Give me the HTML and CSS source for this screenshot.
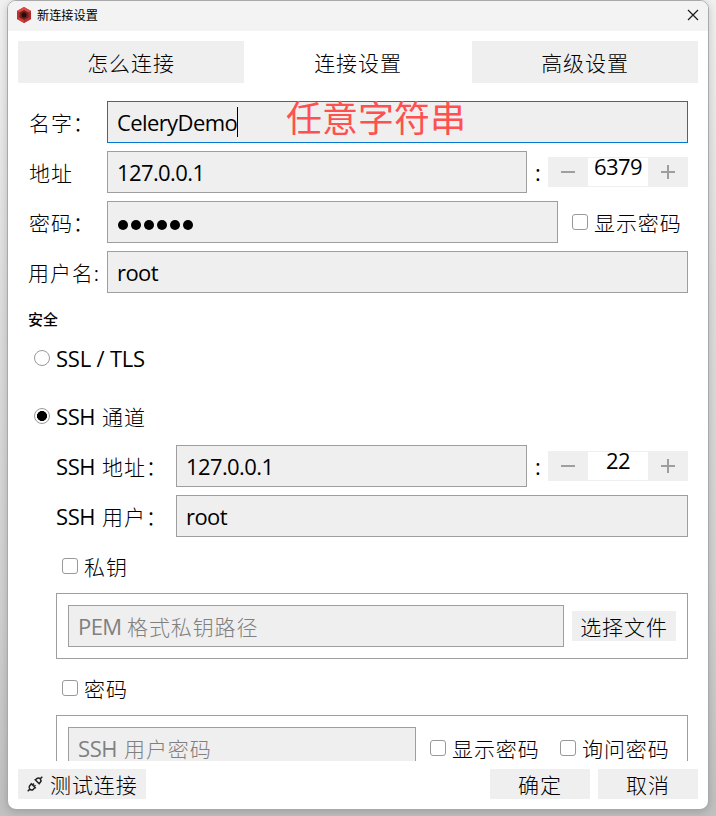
FILE: index.html
```html
<!DOCTYPE html>
<html lang="zh-CN">
<head>
<meta charset="utf-8">
<title>新连接设置</title>
<link rel="stylesheet" href="styles.css">
</head>
<body>
<main class="window">
  <header class="titlebar">
    <svg class="logo" width="16" height="16" viewBox="0 0 16 16"><path d="M8 0l7 4v8l-7 4-7-4V4z" fill="#a92b2b"/><path d="M8 0l7 4-3 2-4-2-4 2-3-2z" fill="#dc4a43"/><path d="M1 4l3 2v4l-3 2z" fill="#bd3030"/><path d="M1 12l3-2 4 2v4z" fill="#d53c39"/><path d="M8 16v-4l4-2 3 2z" fill="#bb3030"/><path d="M8 3l4.500 2.500v5L8 13l-4.500-2.500v-5z" fill="#712020"/><circle cx="8" cy="8" r="2.500" fill="#240d0d"/></svg>
    <span class="title">新连接设置</span>
    <svg class="close" width="12" height="12" viewBox="0 0 12 12"><path d="M1 1l10 10M11 1L1 11" stroke="#1b1b1b" stroke-width="1.200"/></svg>
  </header>
  <nav class="tabs">
    <div class="tab cjk">怎么连接</div><div class="tab active cjk">连接设置</div><div class="tab cjk">高级设置</div>
  </nav>
  <section class="form">
    <div class="row">
      <label class="label cjk">名字：</label>
      <div class="field focus"><span class="name">CeleryDemo</span><i class="caret"></i><span class="note">任意字符串</span></div>
    </div>
    <div class="row">
      <label class="label cjk">地址</label>
      <div class="field ip">127.0.0.1</div>
      <span class="colon">:</span>
      <div class="spin"><svg class="step" viewBox="0 0 40 30"><path d="M13 15h14"/></svg><span class="value">6379</span><svg class="step" viewBox="0 0 40 30"><path d="M13 15h14M20 8v14"/></svg></div>
    </div>
    <div class="row">
      <label class="label cjk">密码：</label>
      <div class="field dots"><i></i><i></i><i></i><i></i><i></i><i></i></div>
      <label class="option show"><i class="box"></i><span class="cjk">显示密码</span></label>
    </div>
    <div class="row">
      <label class="label user cjk">用户名:</label>
      <div class="field">root</div>
    </div>
    <h2 class="heading">安全</h2>
    <label class="radio-row ssl"><i class="radio"></i><span class="ssl-text">SSL / TLS</span></label>
    <label class="radio-row ssh"><i class="radio on"></i><span class="ssh-text">SSH</span><span class="cjk">通道</span></label>
    <div class="nested">
      <div class="row">
        <label class="label"><span class="ssh-text">SSH</span><span class="cjk">地址：</span></label>
        <div class="field ip">127.0.0.1</div>
        <span class="colon">:</span>
        <div class="spin"><svg class="step" viewBox="0 0 40 30"><path d="M13 15h14"/></svg><span class="value">22</span><svg class="step" viewBox="0 0 40 30"><path d="M13 15h14M20 8v14"/></svg></div>
      </div>
      <div class="row">
        <label class="label"><span class="ssh-text">SSH</span><span class="cjk">用户：</span></label>
        <div class="field">root</div>
      </div>
      <label class="option key"><i class="box"></i><span class="cjk">私钥</span></label>
      <div class="group">
        <div class="field hint"><span class="pem-text">PEM</span><span class="cjk">格式私钥路径</span></div>
        <button class="button choose cjk">选择文件</button>
      </div>
      <label class="option pass"><i class="box"></i><span class="cjk">密码</span></label>
      <div class="group">
        <div class="field hint"><span class="ssh-text">SSH</span><span class="cjk">用户密码</span></div>
        <label class="option in-group"><i class="box"></i><span class="cjk">显示密码</span></label>
        <label class="option in-group"><i class="box"></i><span class="cjk">询问密码</span></label>
      </div>
    </div>
  </section>
  <footer class="footer">
    <button class="button test cjk"><svg width="16" height="16" viewBox="0 0 16 16" fill="none" stroke="#222" stroke-width="1.500"><path d="M.700 15.300l2-2M13.300 2.700l2-2M3.800 7.200l5 5M4.500 7.900L2.700 9.700Q1.300 11.500 2.700 13.200Q4.500 14.700 6.300 13.300L8.100 11.500M5.500 8.900l1.500-1.300M7.100 10.500l1.500-1.300M7.700 3.300l5 5M8.400 4L9.700 2.700Q11.500 1.300 13.200 2.700Q14.700 4.500 13.300 6.300L12 7.600"/></svg>测试连接</button>
    <button class="button wide cjk">确定</button>
    <button class="button wide cjk">取消</button>
  </footer>
</main>
</body>
</html>
```
FILE: styles.css
```css
* { box-sizing: border-box; }
body {
  margin: 0;
  height: 816px;
  overflow: hidden;
  background: linear-gradient(#f0f0f0, #dedede 35%, #d0d0d0 75%, #c0c0c0);
  font-family: "Open Sans", "Noto Sans CJK SC", sans-serif;
  font-size: 22px;
  letter-spacing: -.6px;
  color: #000;
}
.window {
  width: 702px;
  height: 810px;
  margin-left: 7px;
  border: 1px solid #a9a9a9;
  border-radius: 9px;
  background: #fff;
  overflow: hidden;
  display: flex;
  flex-direction: column;
  box-shadow: 0 2px 8px rgba(0, 0, 0, .18);
}
.cjk {
  font-family: "Noto Sans CJK SC", sans-serif;
  font-size: 21px;
  font-weight: 300;
  letter-spacing: .9px;
}
.titlebar {
  height: 30px;
  flex: none;
  background: #f3f3f3;
  display: flex;
  align-items: center;
  padding: 0 9px 2px 8px;
}
.title {
  font: 12.2px/28px "Noto Sans CJK SC", sans-serif;
  letter-spacing: 0;
  margin-left: 5px;
  flex: 1;
}
.tabs {
  display: grid;
  grid-template-columns: repeat(3, 226px);
  gap: 1px;
  padding: 10px 10px 0;
  flex: none;
}
.tab {
  height: 42px;
  line-height: 43px;
  text-align: center;
  background: #efefef;
}
.tab.active { background: #fff; }
.form {
  height: 678px;
  flex: none;
  padding: 18px 20px 0;
  overflow: hidden;
}
.row {
  display: flex;
  align-items: center;
  height: 42px;
  margin-bottom: 8px;
}
.label {
  width: 79px;
  flex: none;
  white-space: nowrap;
  line-height: 42px;
  padding-left: 1px;
}
.user { padding-left: 0; }
.field {
  flex: 1;
  height: 42px;
  border: 1px solid #9e9e9e;
  background: #efefef;
  padding-left: 9px;
  line-height: 42px;
  white-space: nowrap;
  display: flex;
  align-items: center;
  position: relative;
}
.field.focus { border-color: #0078d4; }
.name { letter-spacing: -.6px; }
.caret { width: 1px; height: 30px; background: #000; }
.note {
  position: absolute;
  left: 178px;
  top: -9px;
  font: 36px/46px "Noto Sans CJK SC", sans-serif;
  letter-spacing: 0;
  color: #ff5050;
}
.field.ip { flex: 0 0 420px; }
.colon { width: 21px; text-align: center; line-height: 42px; }
.spin {
  display: flex;
  width: 140px;
  height: 30px;
  background: #efefef;
}
.step { width: 40px; height: 30px; fill: none; stroke: #9e9e9e; stroke-width: 2; }
.value {
  width: 60px;
  height: 28px;
  margin-top: 1px;
  background: #fff;
  text-align: center;
  line-height: 17px;
}
.field.dots { flex: 0 0 451px; gap: 3px; padding: 5px 0 0 10px; }
.dots i { width: 10px; height: 10px; border-radius: 50%; background: #000; }
.option { display: flex; align-items: center; white-space: nowrap; }
.show { margin-left: 14px; }
.box {
  width: 16px;
  height: 16px;
  border: 1px solid #999;
  border-radius: 3px;
  background: #fff;
  margin: 0 6px 0 0;
  flex: none;
}
.heading {
  margin: 14px 0 0;
  font: 500 15px/24px "Noto Sans CJK SC", sans-serif;
  letter-spacing: 0;
}
.radio-row { display: flex; align-items: center; height: 42px; padding-left: 6px; }
.ssl { margin-top: 6px; }
.ssh { margin-top: 16px; }
.radio {
  width: 16px;
  height: 16px;
  border: 1px solid #999;
  border-radius: 50%;
  margin: 0 6px 0 0;
}
.radio.on { background: radial-gradient(circle, #000 4.700px, #fff 5.300px); }
.ssl-text { letter-spacing: -.2px; }
.ssh-text { display: inline-block; width: 46px; letter-spacing: -.4px; }
.pem-text { width: 49px; }
.nested { padding-left: 28px; margin-top: 8px; }
.nested .label { width: 120px; padding: 0; }
.nested .field.ip { flex-basis: 351px; }
.key, .pass { height: 42px; padding-left: 6px; }
.group {
  display: flex;
  align-items: center;
  height: 66px;
  margin-top: 6px;
  padding: 0 11px;
  border: 1px solid #9e9e9e;
}
.pass { margin-top: 8px; }
.hint { color: #808080; }
.button {
  border: 0;
  height: 30px;
  padding: 0;
  background: #efefef;
  color: #000;
  line-height: 30px;
}
.choose { width: 104px; margin-left: 8px; }
.in-group { width: 116px; margin-left: 14px; }
.footer { display: flex; gap: 8px; padding: 8px 10px 0; }
.test {
  width: 128px;
  margin-right: auto;
  display: flex;
  align-items: center;
  padding-left: 9px;
  gap: 7px;
}
.wide { width: 100px; }
```
